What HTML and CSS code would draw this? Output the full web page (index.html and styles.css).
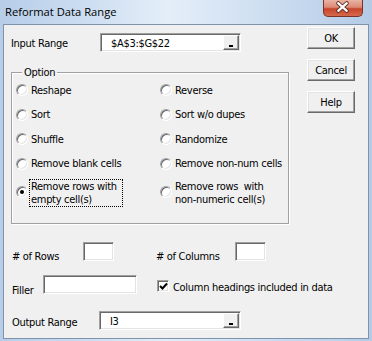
FILE: index.html
```html
<!DOCTYPE html>
<html>
<head>
<meta charset="utf-8">
<link rel="stylesheet" href="styles.css">
</head>
<body>
<div class="window">
  <div class="titlebar">
    <span class="title">Reformat Data Range</span>
    <div class="close">
      <svg width="41" height="17" viewBox="0 0 41 17">
        <path d="M16 4 L25 12 M25 4 L16 12" stroke="#5a2a22" stroke-width="4.2" stroke-linecap="round" fill="none"/>
        <path d="M16 4 L25 12 M25 4 L16 12" stroke="#fff" stroke-width="2.4" stroke-linecap="round" fill="none"/>
      </svg>
    </div>
  </div>
  <div class="client">
    <div class="top">
      <div class="main">
        <div class="input-row">
          <span class="lbl lbl-input">Input Range</span>
          <div class="refedit refedit-input"><span class="val">$A$3:$G$22</span><span class="dots"><i></i></span></div>
        </div>
        <div class="group">
          <span class="legend">Option</span>
          <div class="options">
            <div class="opt"><span class="radio"></span><span class="txt">Reshape</span></div>
            <div class="opt"><span class="radio"></span><span class="txt">Reverse</span></div>
            <div class="opt"><span class="radio"></span><span class="txt">Sort</span></div>
            <div class="opt"><span class="radio"></span><span class="txt">Sort w/o dupes</span></div>
            <div class="opt"><span class="radio"></span><span class="txt">Shuffle</span></div>
            <div class="opt"><span class="radio"></span><span class="txt">Randomize</span></div>
            <div class="opt"><span class="radio"></span><span class="txt">Remove blank cells</span></div>
            <div class="opt"><span class="radio"></span><span class="txt">Remove non-num cells</span></div>
            <div class="opt"><span class="radio checked"></span><span class="txt two focus">Remove rows with<br>empty cell(s)</span></div>
            <div class="opt"><span class="radio"></span><span class="txt two right2">Remove rows&nbsp; with<br>non-numeric cell(s)</span></div>
          </div>
        </div>
      </div>
      <div class="buttons">
        <div class="btn">OK</div>
        <div class="btn">Cancel</div>
        <div class="btn">Help</div>
      </div>
    </div>
    <div class="row row-a">
      <span class="lbl lbl-rows">#&nbsp;of Rows</span>
      <div class="box box-small"></div>
      <span class="lbl lbl-cols">#&nbsp;of Columns</span>
      <div class="box box-small"></div>
    </div>
    <div class="row row-b">
      <span class="lbl lbl-filler">Filler</span>
      <div class="box box-filler"></div>
      <span class="check"><svg width="9" height="9" viewBox="0 0 9 9"><path d="M1 4 L3.5 6.5 L8 1.5" stroke="#000" stroke-width="2" fill="none"/></svg></span>
      <span class="lbl lbl-check">Column headings included in data</span>
    </div>
    <div class="row row-c">
      <span class="lbl lbl-output">Output Range</span>
      <div class="refedit refedit-output"><span class="val">I3</span><span class="dots"><i></i></span></div>
    </div>
  </div>
</div>
</body>
</html>
```

FILE: styles.css
```css
* { box-sizing: border-box; }
html, body { margin: 0; padding: 0; }
body {
  width: 372px;
  height: 341px;
  overflow: hidden;
  background: #bcd2ea;
  font-family: "DejaVu Sans Condensed", "DejaVu Sans", sans-serif;
  font-stretch: semi-condensed;
  font-size: 11px;
  letter-spacing: -0.3px;
  color: #000;
}
.window {
  width: 372px;
  height: 341px;
  background: linear-gradient(to right, #b7cde8 0%, #c9dbf0 20%, #e4eef8 45%, #cfdff2 70%, #b4cbe6 100%);
}
.titlebar {
  height: 24px;
  display: flex;
  align-items: flex-start;
  padding-left: 5px;
}
.title {
  font-family: "Open Sans", "Noto Sans", sans-serif;
  font-stretch: normal;
  font-size: 11.2px;
  letter-spacing: 0;
  line-height: 23px;
  color: #000;
}
.close {
  margin-left: auto;
  margin-right: 9px;
  width: 40px;
  height: 17px;
  border: 1px solid #7b3326;
  border-top: none;
  border-radius: 0 0 5px 5px;
  background: linear-gradient(to bottom, #eab3a4 0%, #dc8a74 45%, #c8432c 55%, #d46a4c 100%);
  display: flex;
}
.close svg { display: block; margin: -1px 0 0 -1px; }
.client {
  margin: 0 3px;
  height: 315px;
  border: 1px solid #8093ad;
  background: #f0f0f0;
}
.top { display: flex; align-items: flex-start; }
.main { margin-left: 7px; width: 278px; padding-top: 8px; }
.input-row { display: flex; align-items: center; height: 19px; }
.lbl { line-height: 13px; white-space: nowrap; }
.lbl-input { width: 89px; margin-top: 2px; }
.refedit {
  height: 19px;
  background: #fff;
  border: 1px solid;
  border-color: #a0a0a0 #fff #fff #a0a0a0;
  box-shadow: inset 1px 1px 0 #696969, inset -1px -1px 0 #e3e3e3;
  display: flex;
  align-items: center;
  padding: 1px 1px 1px 10px;
}
.refedit-input { width: 141px; }
.refedit-output { width: 142px; }
.val { line-height: 13px; margin-top: 1px; }
.dots {
  margin-left: auto;
  width: 16px;
  height: 15px;
  background: #f0f0f0;
  border: 1px solid;
  border-color: #fff #696969 #696969 #fff;
  box-shadow: inset -1px -1px 0 #a0a0a0;
  display: flex;
  align-items: flex-end;
  justify-content: center;
  padding-bottom: 2px;
}
.dots i { display: block; width: 4px; height: 2px; background: #000; }
.group {
  margin-top: 20px;
  height: 152px;
  border: 1px solid #a0a0a0;
  box-shadow: inset 1px 1px 0 #fff, 1px 1px 0 #fff;
}
.legend {
  display: block;
  width: fit-content;
  margin: -7px 0 0 10px;
  padding: 0 2px;
  line-height: 13px;
  background: #f0f0f0;
}
.options {
  margin-top: -1px;
  padding-left: 4px;
  display: grid;
  grid-template-columns: 144px 1fr;
  grid-template-rows: 24px 25px 24px 25px 32px;
}
.opt { display: flex; align-items: center; }
.radio {
  flex: none;
  width: 12px;
  height: 12px;
  border-radius: 50%;
  background: #fff;
  border: 1px solid;
  border-color: #a0a0a0 #fff #fff #a0a0a0;
  box-shadow: inset 1px 1px 0 #696969, inset -1px -1px 0 #e3e3e3;
  margin-right: 3px;
  display: flex;
  align-items: center;
  justify-content: center;
}
.radio.checked::after {
  content: "";
  width: 4px;
  height: 4px;
  border-radius: 50%;
  background: #000;
}
.txt { line-height: 13px; white-space: nowrap; }
.txt.two { margin-top: 2px; }
.focus {
  outline: 1px dotted #000;
  outline-offset: 0;
  width: 92px;
  padding-left: 1px;
  margin-left: -1px;
}
.right2 { margin-top: 4px; }
.buttons {
  margin-left: 18px;
  padding-top: 2px;
  display: flex;
  flex-direction: column;
  gap: 10px;
}
.btn {
  width: 48px;
  height: 22px;
  background: #f0f0f0;
  border: 1px solid;
  border-color: #fff #696969 #696969 #fff;
  box-shadow: inset -1px -1px 0 #a0a0a0, inset 1px 1px 0 #e3e3e3;
  display: flex;
  align-items: center;
  justify-content: center;
  line-height: 13px;
}
.row { display: flex; align-items: flex-start; padding-left: 8px; }
.row-a { margin-top: 18px; }
.row-b { margin-top: 12px; }
.row-c { margin-top: 14px; }
.box {
  height: 19px;
  background: #fff;
  border: 1px solid;
  border-color: #a0a0a0 #fff #fff #a0a0a0;
  box-shadow: inset 1px 1px 0 #696969, inset -1px -1px 0 #e3e3e3;
}
.box-small { width: 31px; }
.lbl-rows { width: 71px; margin-top: 8px; }
.lbl-cols { width: 79px; margin-left: 42px; margin-top: 8px; }
.lbl-filler { width: 31px; margin-top: 9px; }
.box-filler { width: 94px; }
.check {
  margin-left: 20px;
  margin-top: 5px;
  width: 12px;
  height: 12px;
  background: #fff;
  border: 1px solid;
  border-color: #a0a0a0 #fff #fff #a0a0a0;
  box-shadow: inset 1px 1px 0 #696969, inset -1px -1px 0 #e3e3e3;
  display: flex;
  align-items: center;
  justify-content: center;
}
.lbl-check { margin-left: 4px; margin-top: 6px; }
.lbl-output { width: 87px; margin-top: 5px; }
```
